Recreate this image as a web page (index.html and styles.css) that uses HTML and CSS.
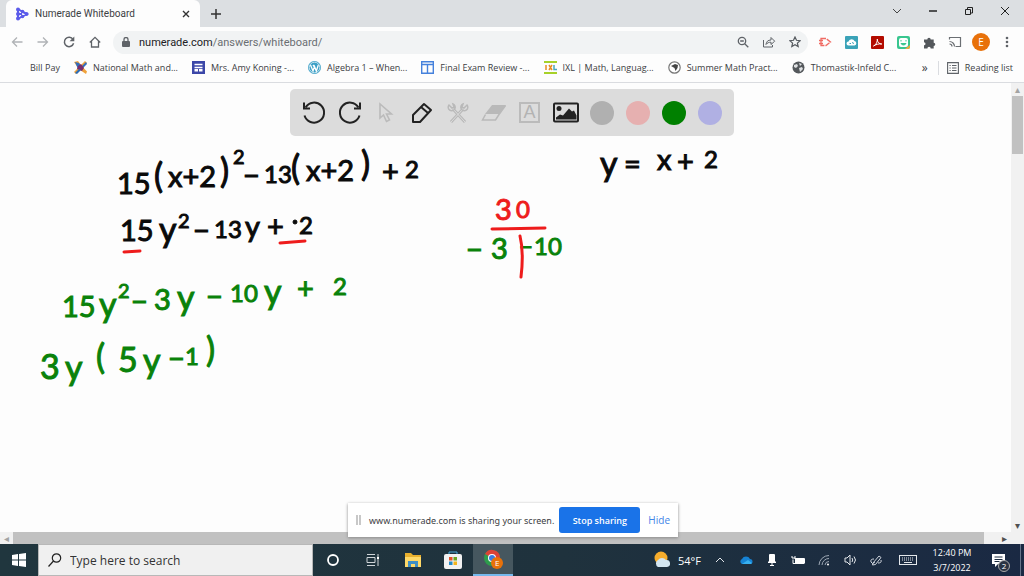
FILE: index.html
```html
<!DOCTYPE html>
<html lang="en">

<head>
    <meta charset="utf-8">
    <title>Numerade Whiteboard</title>
    <link rel="stylesheet" href="styles.css">
</head>

<body>
    <div class="tabstrip">
        <div class="tab">
            <svg class="favicon" width="14" height="14" viewBox="0 0 14 14">
                <path d="M3 2v10M3 2l4 2.500M3 12l4-2.500M7 4.500l5 2.500-5 2.500M3 7h4" fill="none" stroke="#5b5bea" stroke-width="2" />
                <g fill="#5b5bea"><circle cx="3" cy="2.500" r="2" /><circle cx="3" cy="7" r="2" /><circle cx="3" cy="11.500" r="2" /><circle cx="7.500" cy="4.500" r="1.800" /><circle cx="7.500" cy="9.500" r="1.800" /><circle cx="11.500" cy="7" r="2" /></g>
            </svg>
            <span class="tab-title">Numerade Whiteboard</span>
            <button class="icon-btn small" aria-label="Close tab"><svg width="8" height="8"><path d="M1 1l6 6M7 1l-6 6" stroke="#333" stroke-width="1.400" /></svg></button>
        </div>
        <button class="icon-btn new-tab" aria-label="New tab"><svg width="12" height="12"><path d="M6 1v10M1 6h10" stroke="#333" stroke-width="1.500" /></svg></button>
        <div class="window-controls">
            <button class="icon-btn" aria-label="Search tabs"><svg width="10" height="10"><path d="M1 3l4 4 4-4" fill="none" stroke="#444" /></svg></button>
            <button class="icon-btn" aria-label="Minimize"><svg width="10" height="10"><path d="M1 5h8" stroke="#222" stroke-width="1.500" /></svg></button>
            <button class="icon-btn" aria-label="Restore"><svg width="10" height="10"><path d="M1.500 3.500h5v5h-5zM3.500 3v-1.500h5v5.500h-1.500" fill="none" stroke="#222" /></svg></button>
            <button class="icon-btn" aria-label="Close"><svg width="10" height="10"><path d="M1 1l8 8M9 1l-8 8" stroke="#222" /></svg></button>
        </div>
    </div>

    <div class="toolbar">
        <button class="icon-btn" aria-label="Back"><svg width="12" height="12"><path d="M11.500 6h-10M6 1.500l-4.500 4.500 4.500 4.500" fill="none" stroke="#b0b3b6" stroke-width="1.300" /></svg></button>
        <button class="icon-btn" aria-label="Forward"><svg width="12" height="12"><path d="M.5 6h10M6 1.500l4.500 4.500-4.500 4.500" fill="none" stroke="#b0b3b6" stroke-width="1.300" /></svg></button>
        <button class="icon-btn" aria-label="Reload"><svg width="12" height="12"><path d="M10 3.300a4.700 4.700 0 1 0 .6 4" fill="none" stroke="#5f6368" stroke-width="1.500" /><path d="M11.300 .5v4.700h-4.700z" fill="#5f6368" /></svg></button>
        <button class="icon-btn" aria-label="Home"><svg width="12" height="12"><path d="M.8 6.500l5.200-5.200 5.200 5.200M2.500 5v6h7v-6" fill="none" stroke="#5f6368" stroke-width="1.300" /></svg></button>
        <div class="omnibox">
            <svg width="8" height="10"><rect y="4" width="8" height="6" rx="1" fill="#5f6368" /><path d="M2 4.500v-2a2 2 0 0 1 4 0v2" fill="none" stroke="#5f6368" stroke-width="1.300" /></svg>
            <div class="url"><b>numerade.com</b>/answers/whiteboard/</div>
            <button class="icon-btn" aria-label="Zoom"><svg width="12" height="12"><circle cx="5" cy="5" r="3.700" fill="none" stroke="#5f6368" stroke-width="1.300" /><path d="M3.200 5h3.600M7.700 7.700l3.600 3.600" stroke="#5f6368" stroke-width="1.300" /></svg></button>
            <button class="icon-btn" aria-label="Share"><svg width="14" height="12"><path d="M1.500 4v7h9v-2M4 8.500c.3-3 2-4.500 5-4.500v-2.500l3.700 3.700-3.700 3.300v-2.300c-2.200 0-3.700.6-5 2.300z" fill="none" stroke="#5f6368" /></svg></button>
            <button class="icon-btn" aria-label="Bookmark this tab"><svg width="12" height="12"><path d="M6 1l1.500 3.300 3.600.4-2.700 2.400.8 3.500-3.200-1.800-3.200 1.800.8-3.500-2.700-2.400 3.600-.4z" fill="none" stroke="#555a5f" stroke-width="1.200" /></svg></button>
        </div>
        <button class="icon-btn" aria-label="Screencastify"><svg width="14" height="12"><path d="M3 2.500h5l4.500 3.500-4.500 3.500h-5zM1 4.500h4M1 7.500h4" fill="none" stroke="#f06b63" stroke-width="1.300" stroke-dasharray="5 1" /></svg></button>
        <button class="icon-btn" aria-label="Cloud extension"><svg width="13" height="13"><rect width="13" height="13" rx="1" fill="#3ba3b8" /><path d="M3.500 9.500a2 2 0 0 1 0-4 3.200 3.200 0 0 1 6-.5 2.300 2.300 0 0 1 0 4.500z" fill="#fff" /><path d="M4.500 7.500h1.500M7.500 6l1 2" stroke="#3ba3b8" /></svg></button>
        <button class="icon-btn" aria-label="Adobe Acrobat"><svg width="13" height="13"><rect width="13" height="13" rx="1" fill="#b30b00" /><path d="M2.500 10c3-1 4-5 3.800-7 0 3.500 2 5 4.500 5-3-.5-6 .5-8.300 2z" fill="none" stroke="#fff" /></svg></button>
        <button class="icon-btn" aria-label="Bitmoji"><svg width="13" height="13"><rect width="13" height="13" rx="2" fill="#39c68f" /><path d="M8 13l5-4v2a2 2 0 0 1-2 2z" fill="#f3a63b" /><rect x="2" y="2" width="9" height="9" rx="2" fill="#fff" /><path d="M4 4v1.500M9 4v1.500M4 7.500a2.600 2 0 0 0 5 0z" fill="#39c68f" stroke="#39c68f" /></svg></button>
        <button class="icon-btn" aria-label="Extensions"><svg width="13" height="13"><path d="M1 3.500h3.300a1.700 1.700 0 1 1 3.400 0h3v3.200a1.600 1.600 0 1 1 0 3.200v2.600h-3a1.600 1.600 0 0 0-3.300 0h-3.400v-3.300a1.500 1.500 0 0 0 0-3z" fill="#54585c" /></svg></button>
        <button class="icon-btn" aria-label="Cast"><svg width="14" height="12"><path d="M1.500 3.500v-2h11v9h-5M1.500 5.500a5 5 0 0 1 5 5M1.500 8a2.500 2.500 0 0 1 2.500 2.500" fill="none" stroke="#6b6f73" stroke-width="1.200" /></svg></button>
        <button class="icon-btn"><span class="avatar">E</span></button>
        <button class="icon-btn" aria-label="Menu"><svg width="4" height="12" fill="#5f6368"><circle cx="2" cy="2" r="1.300" /><circle cx="2" cy="6" r="1.300" /><circle cx="2" cy="10" r="1.300" /></svg></button>
    </div>

    <div class="bookmarks">
        <a href="#" class="plain">Bill Pay</a>
        <a href="#"><svg width="13" height="13"><path d="M0 1l4-1 3 4 4-4 2 2-4 4.500 4 4-1 2.500-6-4-4 4-2-2 4-4z" fill="#f0a23a" /><path d="M1 1l4 1 2 3-3 3zM8 5l4-4 1 2-4 4z" fill="#326ec0" /><path d="M4 5l3-2 3 4-2 3-5-2z" fill="#7a2d6b" /><path d="M1 12l4-4 2 1-4 4z" fill="#2b6bb5" /></svg>National Math and...</a>
        <a href="#"><svg width="13" height="13"><rect width="13" height="13" fill="#3c47a8" /><path d="M2.500 3.500h8M2.500 6.500h8" stroke="#fff" stroke-width="1.500" /><path d="M2.500 8h3.500v2.500h-3.500zM7 8h3.500v2.500h-3.500z" fill="#fff" /></svg>Mrs. Amy Koning -...</a>
        <a href="#"><svg width="13" height="13"><circle cx="6.500" cy="6.500" r="6.500" fill="#3b9fc6" /><circle cx="6.500" cy="6.500" r="5.300" fill="none" stroke="#fff" stroke-width=".7" /><path d="M2.500 4l2.500 6 1.500-4.500 1.800 4.500 2-6M5 4l1.500 2" fill="none" stroke="#fff" stroke-width="1.300" /></svg>Algebra 1 – When...</a>
        <a href="#"><svg width="13" height="13"><path d="M.7.7h11.600v11.600h-11.600zM.7 3.500h11.600M6.500 3.500v9" fill="none" stroke="#4581dc" stroke-width="1.400" /></svg>Final Exam Review -...</a>
        <a href="#"><svg width="13" height="13"><path d="M0 1h13M0 12h13" stroke="#a7d129" stroke-width="2" /><path d="M2 4v5M5 4l3 5M8 4l-3 5" stroke="#e98b23" stroke-width="1.500" /><path d="M10 4v4.500h3" fill="none" stroke="#48a7bf" stroke-width="1.500" /></svg>IXL | Math, Languag...</a>
        <a href="#"><svg width="13" height="13"><circle cx="6.500" cy="6.500" r="5.700" fill="#fff" stroke="#777" stroke-width="1.200" /><path d="M3 5l4-2 3 1-.5 3-2 3-1-3z" fill="#444" /></svg>Summer Math Pract...</a>
        <a href="#"><svg width="13" height="13"><circle cx="6.500" cy="6.500" r="6" fill="#54585c" /><path d="M2 4l3-1 1 2-2 2-2-1zM7 2l3 1-2 2zM7 7l3-1 1 2-3 3z" fill="#dfe1e3" /></svg>Thomastik-Infeld C...</a>
        <button class="more" aria-label="More bookmarks">»</button>
        <button class="reading-list"><svg width="12" height="12"><path d="M.6.6h10.800v10.800h-10.800zM2.500 3.500h1.200M5 3.500h4.500M2.500 6h1.200M5 6h4.500M2.500 8.500h1.200M5 8.500h4.500" fill="none" stroke="#5f6368" stroke-width="1.100" /></svg>Reading list</button>
    </div>

    <div class="page">
        <div class="content">
            <div class="tools">
                <button aria-label="Undo"><svg width="24" height="24"><path d="M3.500 6.500a10 10 0 1 1-1 8" fill="none" stroke="#222" stroke-width="2" /><path d="M2 1.500v6h6" fill="none" stroke="#222" stroke-width="2" /></svg></button>
                <button aria-label="Redo"><svg width="24" height="24"><path d="M20.500 6.500a10 10 0 1 0 1 8" fill="none" stroke="#222" stroke-width="2" /><path d="M22 1.500v6h-6" fill="none" stroke="#222" stroke-width="2" /></svg></button>
                <button aria-label="Select"><svg width="24" height="24"><path d="M6 3v14l3.500-3 3 6.500 3-1.500-3-6h5z" fill="none" stroke="#bbb" stroke-width="1.600" /></svg></button>
                <button aria-label="Pen"><svg width="24" height="24"><path d="M3 14l11-11 7 6-11 12h-7zM11 6l7 6" fill="none" stroke="#222" stroke-width="2" stroke-linejoin="round" /></svg></button>
                <button aria-label="Tools"><svg width="24" height="24"><path d="M7 8l12 13M17 8l-12 13" stroke="#b9b9b9" stroke-width="3" /><path d="M7 8l12 13M17 8l-12 13" stroke="#dcdcdc" /><path d="M3 4a3.500 3.500 0 1 0 4-1l1 3-2 1zM21 4a3.500 3.500 0 1 1-4-1l-1 3 2 1z" fill="none" stroke="#b9b9b9" stroke-width="1.500" /></svg></button>
                <button aria-label="Eraser"><svg width="26" height="24"><path d="M11 4h14l-7 9h-14z" fill="#b9b9b9" /><path d="M4.500 13.500l-3 5.500h13l3.500-5.500 6.500-9" fill="none" stroke="#b9b9b9" stroke-width="1.500" /></svg></button>
                <button aria-label="Text"><span class="text-tool">A</span></button>
                <button aria-label="Image"><svg width="26" height="22"><rect x="1" y="1.500" width="24" height="18" rx="1" fill="none" stroke="#222" stroke-width="2" /><circle cx="6" cy="6.500" r="2.500" fill="#222" /><path d="M3 17.500v-2l4-3 3 1 6-7 3 3 2-1 2.500 5v4z" fill="#222" /></svg></button>
                <button aria-label="Gray"><span class="swatch gray"></span></button>
                <button aria-label="Pink"><span class="swatch pink"></span></button>
                <button aria-label="Green"><span class="swatch green"></span></button>
                <button aria-label="Lavender"><span class="swatch lavender"></span></button>
            </div>

            <svg class="board">
                <g class="black">
                    <text x="117" y="58">15</text>
                    <text class="lg" x="154" y="52">(</text>
                    <text x="168" y="51">x+2</text>
                    <text class="lg" x="220" y="47">)</text>
                    <text class="sm" x="233" y="28">2</text>
                    <text x="243" y="50">−</text>
                    <text class="num" x="264" y="47">13</text>
                    <text class="lg" x="291" y="44">(</text>
                    <text x="306" y="45">x+2</text>
                    <text class="lg" x="361" y="40">)</text>
                    <text x="382" y="46">+</text>
                    <text class="num" x="405" y="42">2</text>

                    <text x="120" y="105">15</text>
                    <text class="lg" x="159" y="106">y</text>
                    <text class="sm" x="178" y="92">2</text>
                    <text x="193" y="105">−</text>
                    <text class="num" x="214" y="102">13</text>
                    <text x="245" y="101">y</text>
                    <text x="267" y="101">+</text>
                    <text class="num" x="299" y="98">2</text>
                    <circle cx="295" cy="86" r="2" />

                    <text class="lg" x="600" y="40">y</text>
                    <text x="624" y="38">=</text>
                    <text x="657" y="34">x</text>
                    <text x="677" y="36">+</text>
                    <text class="num" x="704" y="32">2</text>
                </g>
                <g class="green">
                    <text x="62" y="181">15</text>
                    <text class="lg" x="99" y="181">y</text>
                    <text class="sm" x="118" y="162">2</text>
                    <text x="131" y="176">−</text>
                    <text x="154" y="174">3</text>
                    <text class="lg" x="177" y="174">y</text>
                    <text x="206" y="171">−</text>
                    <text class="num" x="230" y="166">10</text>
                    <text class="lg" x="264" y="168">y</text>
                    <text x="297" y="163">+</text>
                    <text class="num" x="333" y="159">2</text>

                    <text class="lg" x="40" y="243">3</text>
                    <text class="lg" x="65" y="244">y</text>
                    <text class="lg" x="96" y="233">(</text>
                    <text class="lg" x="118" y="236">5</text>
                    <text class="lg" x="143" y="237">y</text>
                    <text x="168" y="233">−</text>
                    <text class="num" x="185" y="229">1</text>
                    <text class="lg" x="206" y="226">)</text>

                    <text x="466" y="124">−</text>
                    <text x="491" y="123">3</text>
                    <text class="num" x="519" y="119">−</text>
                    <text class="num" x="534" y="119">10</text>
                </g>
                <g class="red">
                    <text x="495" y="84">3</text>
                    <text class="num" x="516" y="82">0</text>
                    <path d="M124 116l16-1M280 107l25-2M492 93l53-1M520 100q4 16 1 41" />
                </g>
            </svg>
        </div>
        <div class="vscroll">
            <span class="arrow">▴</span>
            <div class="vthumb"></div>
            <span class="arrow dark">▾</span>
        </div>
    </div>

    <div class="hscroll">
        <span class="arrow">◂</span>
        <div class="hthumb"></div>
        <span class="arrow dark">▸</span>
    </div>

    <div class="sharing">
        <span class="grip"></span>
        <span class="sharing-text">www.numerade.com is sharing your screen.</span>
        <button class="stop">Stop sharing</button>
        <a href="#">Hide</a>
    </div>

    <div class="taskbar">
        <button class="task start" aria-label="Start"><svg width="14" height="14"><path d="M0 2l6-1v5.500h-6zM7 1l7-1v6.500h-7zM0 7.500h6v5.500l-6-1zM7 7.500h7v6.500l-7-1z" fill="#fff" /></svg></button>
        <label class="search">
            <svg width="14" height="14"><circle cx="8.500" cy="5" r="4.200" fill="none" stroke="#222" stroke-width="1.200" /><path d="M5.500 8l-5 5.500" stroke="#222" stroke-width="1.200" /></svg>
            <input type="text" placeholder="Type here to search" aria-label="Search">
        </label>
        <button class="task" aria-label="Cortana"><svg width="14" height="14"><circle cx="7" cy="7" r="5" fill="none" stroke="#fff" stroke-width="1.800" /></svg></button>
        <button class="task" aria-label="Task view"><svg width="14" height="14"><path d="M1 1.500h8M1 4.500h8v5h-8zM1 12.500h8M12 1v12" fill="none" stroke="#cfd5d8" /><path d="M11 5h2" stroke="#fff" stroke-width="2" /></svg></button>
        <button class="task" aria-label="File Explorer"><svg width="18" height="16"><path d="M1 1h6l2 2h8v11h-16z" fill="#e8b02e" /><path d="M1 5h16v10h-16z" fill="#ffd968" /><path d="M4 15v-6h10v6h-3v-3h-4v3z" fill="#3f8fc4" /></svg></button>
        <button class="task" aria-label="Microsoft Store"><svg width="18" height="18"><path d="M5 4v-3h8v3" fill="none" stroke="#4aa8d8" /><rect y="3" width="18" height="15" rx="2" fill="#f2f2f2" /><path d="M5 6h3.500v3.500h-3.500z" fill="#e34f26" /><path d="M9.500 6h3.500v3.500h-3.500z" fill="#68a521" /><path d="M5 10.500h3.500v3.500h-3.500z" fill="#258bc8" /><path d="M9.500 10.500h3.500v3.500h-3.500z" fill="#f4b51c" /></svg></button>
        <button class="task active" aria-label="Chrome"><svg width="20" height="20"><circle cx="9" cy="9" r="8" fill="#2e9c4c" /><path d="M9 9l-7-4a8 8 0 0 1 15 4z" fill="#dc4236" /><path d="M9 9h8a8 8 0 0 1-8 8z" fill="#f4c020" /><circle cx="9" cy="9" r="4" fill="#fff" /><circle cx="9" cy="9" r="3" fill="#3c7ce0" /><circle cx="14" cy="14" r="6" fill="#e8710a" /><text class="badge-letter" x="12" y="17">E</text></svg></button>
        <div class="tray">
            <button class="task weather"><svg width="18" height="18"><circle cx="8" cy="7" r="6.500" fill="#f7ad2c" /><path d="M5 16a4 4 0 0 1 0-7 5 5 0 0 1 8 0 3.500 3.500 0 0 1 1 7z" fill="#d4e6f1" /></svg>54°F</button>
            <button class="tray-icon" aria-label="Show hidden icons"><svg width="12" height="12"><path d="M2 8l4-4 4 4" fill="none" stroke="#e4e8ec" /></svg></button>
            <button class="tray-icon" aria-label="OneDrive"><svg width="14" height="12"><path d="M3 10a2.700 2.700 0 0 1 0-5 4.500 4.500 0 0 1 8 0 2.600 2.600 0 0 1 1 5z" fill="#1683d4" /><path d="M3 10l6-4 4 3-1 1z" fill="#37b0f0" /></svg></button>
            <button class="tray-icon" aria-label="Microphone"><svg width="8" height="12"><rect x="1" width="6" height="9" rx="1" fill="#fff" /><path d="M0 7v1.500h8v-1.500M4 9v3M2 11.500h4" fill="none" stroke="#fff" /></svg></button>
            <button class="tray-icon" aria-label="Battery"><svg width="14" height="12"><rect x="4" y="4" width="9" height="6" fill="#fff" /><path d="M13 5.500h1v3h-1zM4 9.500h-2v-4M1 2v2h3v-2M3.500 4.500h10v5" fill="none" stroke="#fff" /></svg></button>
            <button class="tray-icon" aria-label="Wi-Fi"><svg width="12" height="12"><path d="M1 11a10 10 0 0 1 10-9.500M4 11a7 7 0 0 1 7-6.500M7 11a4 4 0 0 1 4-3.500" fill="none" stroke="#9ea8b5" /><circle cx="10" cy="10.500" r="1" fill="#fff" /></svg></button>
            <button class="tray-icon" aria-label="Volume"><svg width="13" height="12"><path d="M1 4h2l3-3v10l-3-3h-2zM8 4q1.500 2 0 4M10 2.500q3 3.500 0 7" fill="none" stroke="#e4e8ec" /></svg></button>
            <button class="tray-icon" aria-label="Pen workspace"><svg width="12" height="12"><path d="M3 9l6-7 2 1.500-5.500 7-3 .5zM4 5q-4 0-3 3t4 0M8 9q4 0 3-3" fill="none" stroke="#d0d6de" /></svg></button>
            <button class="tray-icon keyboard" aria-label="Touch keyboard"><svg width="18" height="12"><rect x=".5" y="1.500" width="17" height="9" fill="none" stroke="#e4e8ec" /><path d="M3 4h12M3 6h12" stroke="#e4e8ec" stroke-dasharray="1 1" /><path d="M5 8.500h8" stroke="#e4e8ec" /></svg></button>
            <div class="clock"><span>12:40 PM</span><span>3/7/2022</span></div>
            <button class="notify" aria-label="Notifications"><svg width="14" height="13"><path d="M0 0h13v10h-7l-3 3v-3h-3z" fill="#fff" /><path d="M2.500 3h8M2.500 5.500h8M2.500 7.500h5" stroke="#1c2c40" /></svg><span class="count">2</span></button>
        </div>
    </div>
</body>

</html>
```
FILE: styles.css
```css
* {
    box-sizing: border-box;
}

body {
    margin: 0;
    min-height: 100vh;
    display: flex;
    flex-direction: column;
    position: relative;
    background-color: #fdfdfd;
    color: #3c4043;
    font-family: "Open Sans", "Noto Sans", sans-serif;
    font-size: 10px;
}

button {
    border: 0;
    padding: 0;
    background: none;
    color: inherit;
    font: inherit;
}

a {
    color: inherit;
    text-decoration: none;
}

svg {
    flex: none;
}

.icon-btn {
    display: flex;
    flex: none;
    align-items: center;
    justify-content: center;
    width: 26px;
    height: 22px;
}

/* tabs */
.tabstrip {
    display: flex;
    height: 27px;
    background-color: #dcdfe2;
}

.tab {
    display: flex;
    align-items: center;
    gap: 6px;
    width: 194px;
    margin-left: 6px;
    padding: 0 4px 0 9px;
    border-radius: 6px 6px 0 0;
    background-color: #fdfdfd;
}

.tab-title {
    flex: 1;
    font-family: Roboto, sans-serif;
    white-space: nowrap;
}

.icon-btn.small {
    width: 20px;
}

.new-tab {
    height: 27px;
    margin-left: 3px;
}

.window-controls {
    display: flex;
    margin-left: auto;
    padding-right: 1px;
}

.window-controls .icon-btn {
    width: 36px;
}

/* address bar */
.toolbar {
    display: flex;
    align-items: center;
    height: 30px;
    padding: 0 4px;
}

.omnibox {
    display: flex;
    flex: 1;
    align-items: center;
    height: 23px;
    margin: 0 4px 0 5px;
    padding-left: 9px;
    border-radius: 12px;
    background-color: #f1f3f4;
}

.url {
    flex: 1;
    margin-left: 9px;
    color: #6a6e72;
    font-family: Roboto, sans-serif;
    font-size: 11px;
}

.url b {
    color: #202124;
    font-weight: normal;
}

.avatar {
    width: 18px;
    height: 18px;
    border-radius: 50%;
    background-color: #e8710a;
    color: #fff;
    line-height: 18px;
    text-align: center;
}

/* bookmarks */
.bookmarks {
    display: flex;
    align-items: center;
    gap: 14px;
    height: 26px;
    padding: 0 11px 4px 30px;
    border-bottom: 1px solid #dadce0;
    font-size: 9px;
    white-space: nowrap;
}

.bookmarks a,
.reading-list {
    display: flex;
    align-items: center;
    gap: 6px;
}

.more {
    margin-left: auto;
    font-size: 12px;
}

.reading-list {
    height: 14px;
    margin-left: -4px;
    padding-left: 8px;
    border-left: 1px solid #dadce0;
}

/* whiteboard */
.page {
    display: flex;
    flex: 1;
}

.content {
    display: flex;
    flex: 1;
    flex-direction: column;
    align-items: center;
    padding: 6px 0 0 12px;
}

.tools {
    display: flex;
    height: 47px;
    padding: 0 6px;
    border-radius: 5px;
    background-color: #dcdcdc;
}

.tools button {
    display: flex;
    align-items: center;
    justify-content: center;
    width: 36px;
}

.text-tool {
    width: 21px;
    height: 21px;
    border: 2px solid #bbb;
    color: #b3b3b3;
    font: 18px/17px "Liberation Sans", sans-serif;
    text-align: center;
}

.swatch {
    width: 24px;
    height: 24px;
    border-radius: 50%;
}

.swatch.gray {
    background-color: #b0b0b0;
}

.swatch.pink {
    background-color: #e6b0b0;
}

.swatch.green {
    background-color: #008000;
}

.swatch.lavender {
    background-color: #b0b0e3;
}

.board {
    flex: 1;
    align-self: stretch;
    margin-left: -12px;
    overflow: visible;
    font-family: Lato, sans-serif;
    font-size: 29px;
    stroke-width: 1px;
}

.board .lg {
    font-size: 34px;
}

.board .num {
    font-size: 24px;
}

.board .sm {
    font-size: 20px;
}

.board .black {
    fill: #0a0a0a;
    stroke: #0a0a0a;
}

.board .green {
    fill: #0a820a;
    stroke: #0a820a;
}

.board .red {
    fill: #ee1c1c;
    stroke: #ee1c1c;
}

.board path {
    fill: none;
    stroke-width: 3px;
    stroke-linecap: round;
}

/* scrollbars */
.vscroll {
    display: flex;
    flex-direction: column;
    align-items: center;
    width: 13px;
    background-color: #f1f1f1;
}

.vthumb {
    width: 11px;
    height: 58px;
    margin-bottom: auto;
    background-color: #c1c1c1;
}

.arrow {
    width: 13px;
    height: 13px;
    color: #a3a3a3;
    font: 10px/13px "DejaVu Sans", sans-serif;
    text-align: center;
}

.arrow.dark {
    color: #505050;
}

.hscroll {
    display: flex;
    height: 12px;
    padding-right: 13px;
    background-color: #f1f1f1;
}

.hthumb {
    flex: 1;
    margin-right: 14px;
    background-color: #c1c1c1;
}

/* screen sharing notice */
.sharing {
    position: absolute;
    bottom: 39px;
    left: 50%;
    display: flex;
    align-items: center;
    width: 330px;
    height: 34px;
    margin-left: -164px;
    padding: 0 8px;
    background-color: #fff;
    box-shadow: 0 1px 3px #888;
    white-space: nowrap;
}

.grip {
    width: 5px;
    height: 10px;
    border: solid #c8c8c8;
    border-width: 0 2px;
}

.sharing-text {
    flex: 1;
    margin-left: 8px;
    font-family: "Noto Sans", sans-serif;
    font-size: 9px;
}

.stop {
    width: 81px;
    height: 26px;
    margin-right: 8px;
    border-radius: 3px;
    background-color: #1a73e8;
    color: #fff;
    font-weight: 600;
    font-size: 9px;
}

.sharing a {
    color: #4285e8;
}

/* taskbar */
.taskbar {
    display: flex;
    height: 32px;
    background: linear-gradient(90deg, #20363e, #1f323d 55%, #1a2943);
    color: #fff;
}

.task {
    display: flex;
    flex: none;
    align-items: center;
    justify-content: center;
    width: 40px;
}

.start {
    width: 38px;
}

.search {
    display: flex;
    align-items: center;
    gap: 8px;
    width: 275px;
    padding-left: 9px;
    border: 1px solid #b8b8b8;
    background-color: #f0f0f0;
}

.search input {
    width: 200px;
    border: 0;
    padding: 0;
    background: none;
    font: 12px "Open Sans", sans-serif;
}

.search input::placeholder {
    color: #333;
}

.active {
    border-bottom: 2px solid #76b9ed;
    background-color: #46575f;
}

.badge-letter {
    fill: #fff;
    font-size: 8px;
}

.tray {
    display: flex;
    align-items: center;
    margin-left: auto;
    padding-right: 3px;
}

.weather {
    gap: 7px;
    width: 52px;
    margin-right: 4px;
    font-size: 11px;
}

.tray-icon {
    display: flex;
    align-items: center;
    justify-content: center;
    width: 26px;
    height: 32px;
}

.keyboard {
    width: 38px;
}

.clock {
    display: flex;
    flex-direction: column;
    align-items: center;
    width: 50px;
    font-size: 9px;
    line-height: 15px;
    white-space: nowrap;
}

.notify {
    position: relative;
    display: flex;
    align-items: center;
    justify-content: center;
    width: 44px;
    height: 32px;
    border-right: 1px solid #66748a;
}

.count {
    position: absolute;
    right: 10px;
    bottom: 4px;
    width: 12px;
    height: 12px;
    border: 1px solid #aaa;
    border-radius: 50%;
    background-color: #2a3342;
    font-size: 8px;
    line-height: 10px;
}
```
